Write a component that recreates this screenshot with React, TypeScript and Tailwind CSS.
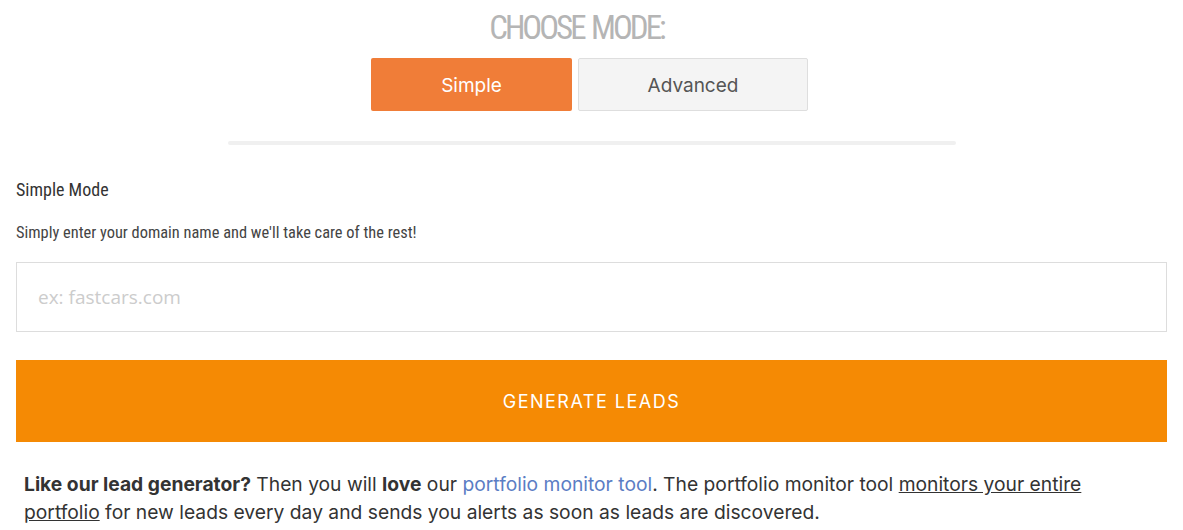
import React, { useState } from 'react';

export default function App() {
  const [mode, setMode] = useState<'simple' | 'advanced'>('simple');
  const [domain, setDomain] = useState('');

  return (
    <div className="min-h-screen bg-white font-['Inter',sans-serif] text-[#333]">
      {/* Mode chooser */}
      <div className="flex flex-col items-center pt-[10px]">
        <h2 className="pr-[30px] font-['Roboto',sans-serif] [font-stretch:75%] font-normal text-[33px] leading-[35px] tracking-[-3px] [word-spacing:3px] text-[#b5b5b5] uppercase">
          Choose Mode:
        </h2>
        <div className="mt-[13px] flex gap-[6px] pr-[4px]">
          <button
            onClick={() => setMode('simple')}
            className={`h-[53px] w-[201px] rounded-[2px] pt-[3px] text-[19px] ${
              mode === 'simple' ? 'bg-[#f07d38] text-white' : 'border border-[#dedede] bg-[#f4f4f4] text-[#555]'
            }`}
          >
            Simple
          </button>
          <button
            onClick={() => setMode('advanced')}
            className={`h-[53px] w-[230px] rounded-[2px] pt-[3px] text-[19px] ${
              mode === 'advanced' ? 'bg-[#f07d38] text-white' : 'border border-[#dedede] bg-[#f4f4f4] text-[#555]'
            }`}
          >
            Advanced
          </button>
        </div>
        <div className="mt-[30px] h-[4px] w-[728px] rounded-full bg-[#f0f0f0]" />
      </div>

      {/* Form */}
      <div className="px-4 pt-[33px]">
        <h3 className="font-['Roboto',sans-serif] [font-stretch:75%] text-[18px] leading-[24px] text-[#333]">
          Simple Mode
        </h3>
        <p className="mt-[20px] font-['Roboto',sans-serif] [font-stretch:75%] text-[16.4px] leading-[22px] text-[#444]">
          Simply enter your domain name and we'll take care of the rest!
        </p>
        <input
          value={domain}
          onChange={(e) => setDomain(e.target.value)}
          placeholder="ex: fastcars.com"
          className="mt-[18px] block h-[70px] w-full border border-[#dddddd] px-[21px] font-['Open_Sans',sans-serif] text-[19px] text-[#555] placeholder:text-[#cccccc] outline-none"
        />
        <button className="mt-[28px] h-[82px] w-full bg-[#f58a04] text-[18px] tracking-[1.5px] text-white uppercase">
          Generate Leads
        </button>
        <p className="mt-[28px] pl-2 pr-[60px] text-[19.25px] leading-[28px] text-[#333]">
          <strong className="font-bold">Like our lead generator?</strong> Then you will <strong className="font-bold">love</strong> our{' '}
          <a href="#" className="text-[#5b7dc4]">portfolio monitor tool</a>. The portfolio monitor tool{' '}
          <span className="underline">monitors your entire portfolio</span> for new leads every day and sends you alerts as soon as leads are discovered.
        </p>
      </div>
    </div>
  );
}
